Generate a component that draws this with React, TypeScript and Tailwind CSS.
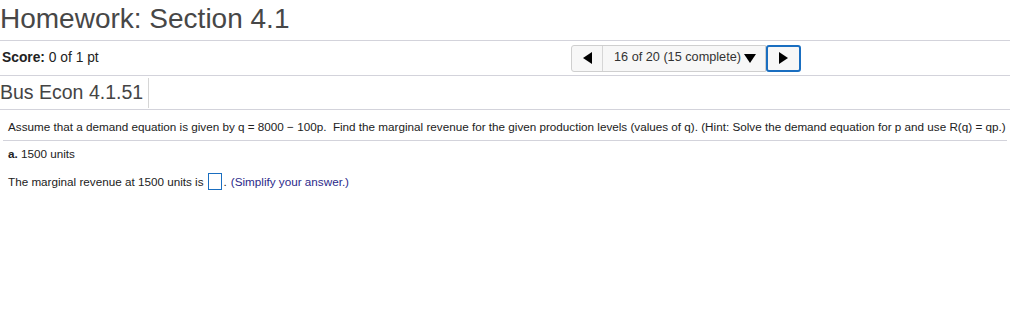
import React from "react";

export default function App() {
  return (
    <div className="w-[1010px] h-[316px] bg-white overflow-hidden" style={{ fontFamily: '"Liberation Sans", Arial, sans-serif' }}>
      <div className="h-[41px] border-b border-[#d3d3db] flex items-center">
        <h1 className="text-[28px] leading-none text-[#474747] -mt-[2px]">Homework: Section 4.1</h1>
      </div>
      <div className="h-[35px] border-b border-[#d3d3db] flex items-center">
        <div className="pl-[2px] text-[13.8px] text-[#222]">
          <span className="font-bold">Score:</span> 0 of 1 pt
        </div>
        <div className="ml-auto mr-[209px] flex items-center">
          <div className="flex h-[27px] border border-[#cfcfcf] rounded-l-[3px] bg-[#f7f7f7]">
            <button className="w-[31px] flex items-center justify-center border-r border-[#d6d6d6]">
              <svg width="9" height="12" viewBox="0 0 9 12"><path d="M9 0 L0 6 L9 12 Z" fill="#000" /></svg>
            </button>
            <button className="w-[162px] flex items-center pl-[11px] text-[12.7px] text-[#333]">
              16 of 20 (15 complete)
              <svg className="ml-[3px]" width="12" height="9" viewBox="0 0 12 9"><path d="M0 0 L12 0 L6 9 Z" fill="#000" /></svg>
            </button>
          </div>
          <button className="w-[35px] h-[27px] flex items-center justify-center border-2 border-[#1a6ec0] rounded-[3px] bg-[#f7f7f7]">
            <svg width="9" height="12" viewBox="0 0 9 12"><path d="M0 0 L9 6 L0 12 Z" fill="#000" /></svg>
          </button>
        </div>
      </div>
      <div className="h-[34px] border-b border-[#d3d3db] flex items-center">
        <div className="h-[30px] w-[149px] border-r border-[#d6d6d6] flex items-center text-[19.5px] text-[#444]">Bus Econ 4.1.51</div>
      </div>
      <div className="px-[3px]">
        <div className="h-[31px] border-b border-[#d3d3db] flex items-center pl-[5px] pt-[4px] text-[11.7px] text-[#222]">
          Assume that a demand equation is given by q = 8000 − 100p.&nbsp; Find the marginal revenue for the given production levels (values of q). (Hint: Solve the demand equation for p and use R(q) = qp.)
        </div>
        <div className="pl-[5px] pt-[4px] text-[11.7px] text-[#222]">
          <span className="font-bold">a.</span> 1500 units
        </div>
        <div className="pl-[5px] mt-[10px] flex items-center text-[11.7px] text-[#222]">
          <span>The marginal revenue at 1500 units is</span>
          <span className="inline-block ml-[4px] w-[14px] h-[17px] border-[1.5px] border-[#1a6ec0]"></span>
          <span className="ml-[2px]">.</span>
          <span className="ml-[4px] text-[#2b2a8a]">(Simplify your answer.)</span>
        </div>
      </div>
    </div>
  );
}
